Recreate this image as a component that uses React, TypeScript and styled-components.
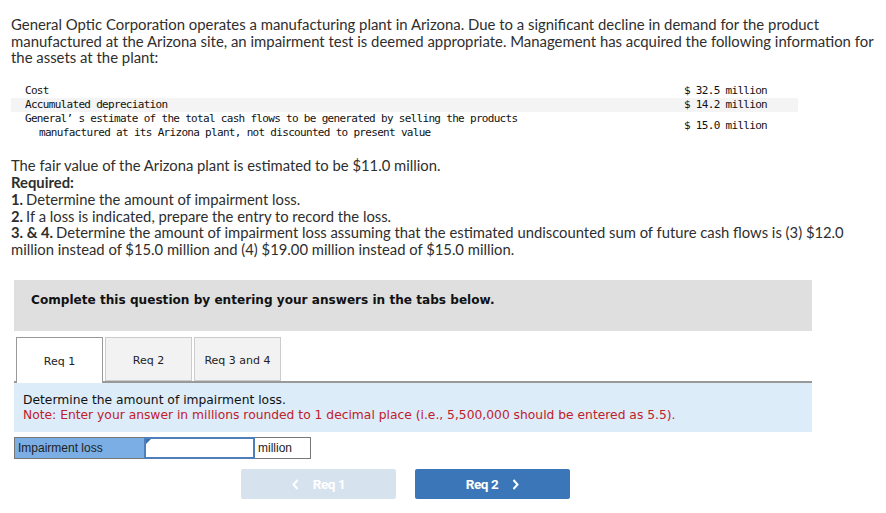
import React from 'react';
import styled, { createGlobalStyle } from 'styled-components';

const GlobalStyle = createGlobalStyle`
  body {
    margin: 0;
    background: #fff;
    font-family: Lato, "Open Sans", sans-serif;
    color: #2e2e2e;
  }
`;

const Page = styled.div`
  width: 886px;
  padding: 16px 0 0 11px;
  box-sizing: border-box;
`;

const Intro = styled.p`
  margin: 0;
  width: 870px;
  font-size: 14.9px;
  line-height: 16.6px;
`;

const FactTable = styled.div`
  margin-top: 18px;
  width: 787px;
  font-family: "DejaVu Sans Mono", monospace;
  font-size: 11px;
  letter-spacing: -0.69px;
  color: #111;
`;

const FactRow = styled.div<{ $shaded?: boolean }>`
  display: grid;
  grid-template-columns: 540px 1fr 114px;
  align-items: center;
  line-height: 14px;
  background: ${p => (p.$shaded ? '#f4f4f4' : 'transparent')};
`;

const FactLabel = styled.div`
  padding-left: 28px;
  text-indent: -14px;
`;

const FactValue = styled.div`
  grid-column: 3;
  white-space: pre;
`;

const Body = styled.div`
  margin-top: 17px;
  font-size: 14.8px;
  line-height: 16.9px;
`;

const Line = styled.div``;

const Strong = styled.b`
  font-weight: 700;
  margin-right: 0.2em;
`;

const Banner = styled.div`
  margin: 22px 0 0 3px;
  width: 798px;
  height: 51px;
  box-sizing: border-box;
  padding: 13px 17px 0;
  background: #dfdfdf;
  font-family: "DejaVu Sans", Verdana, sans-serif;
  font-weight: 700;
  font-size: 12.1px;
  color: #111;
`;

const TabBar = styled.div`
  margin: 6px 0 0 3px;
  width: 798px;
  display: flex;
  align-items: flex-end;
  gap: 2px;
  padding-left: 2px;
  box-sizing: border-box;
  border-bottom: 2px solid #999;
  height: 46px;
`;

const Tab = styled.div<{ $active?: boolean }>`
  width: 87px;
  height: ${p => (p.$active ? '46px' : '44px')};
  margin-bottom: ${p => (p.$active ? '-2px' : '0')};
  box-sizing: border-box;
  display: flex;
  align-items: center;
  justify-content: center;
  padding-top: 2px;
  font-family: "DejaVu Sans", Verdana, sans-serif;
  font-size: 11px;
  color: #222;
  background: ${p => (p.$active ? '#fff' : '#f2f2f2')};
  border: 1px solid ${p => (p.$active ? '#999' : '#ccc')};
  border-bottom: ${p => (p.$active ? 'none' : '1px solid #ccc')};
  position: relative;
  z-index: 1;
`;

const Panel = styled.div`
  margin-left: 3px;
  width: 798px;
  height: 49px;
  box-sizing: border-box;
  padding: 10px 9px 0;
  background: #dcecf9;
  font-family: "DejaVu Sans", Verdana, sans-serif;
  font-size: 12.3px;
  line-height: 15px;
  color: #111;
`;

const Note = styled.div`
  color: #c0202a;
`;

const AnswerRow = styled.div`
  margin: 5px 0 0 3px;
  display: flex;
  height: 22px;
  font-family: "Liberation Sans", Arial, sans-serif;
  font-size: 12px;
  color: #222;
`;

const AnswerLabel = styled.div`
  width: 130px;
  box-sizing: border-box;
  background: #7aaee4;
  border: 1px solid #777;
  border-right: none;
  padding-left: 3px;
  display: flex;
  align-items: center;
`;

const AnswerInput = styled.input`
  width: 111px;
  height: 22px;
  box-sizing: border-box;
  border: 2px solid #4f7fba;
  margin: 0;
  padding: 0 4px;
  outline: none;
  background: #fff;
`;

const InputWrap = styled.div`
  position: relative;
  &::before {
    content: '';
    position: absolute;
    left: 2px;
    top: 2px;
    border-top: 5px solid #3a6fb0;
    border-right: 5px solid transparent;
  }
`;

const Unit = styled.div`
  width: 56px;
  box-sizing: border-box;
  border: 1px solid #777;
  border-left: none;
  padding-left: 3px;
  display: flex;
  align-items: center;
`;

const NavRow = styled.div`
  margin: 10px 0 0 230px;
  display: flex;
  gap: 19px;
`;

const NavButton = styled.button<{ $disabled?: boolean }>`
  width: 155px;
  height: 30px;
  border: none;
  border-radius: 2px;
  background: ${p => (p.$disabled ? '#d7e2ef' : '#3b77b8')};
  color: #fff;
  font-family: Roboto, "Liberation Sans", sans-serif;
  font-weight: 700;
  font-size: 13.5px;
  letter-spacing: -0.4px;
  display: flex;
  align-items: center;
  justify-content: center;
  gap: 14px;
  padding: 0;
  cursor: pointer;
`;

const Chevron = ({ dir }: { dir: 'left' | 'right' }) => (
  <svg width="7" height="11" viewBox="0 0 7 11">
    <path
      d={dir === 'left' ? 'M5.5 1 L1.5 5.5 L5.5 10' : 'M1.5 1 L5.5 5.5 L1.5 10'}
      fill="none"
      stroke="#fff"
      strokeWidth="2"
    />
  </svg>
);

export default function App() {
  return (
    <>
      <GlobalStyle />
      <Page>
        <Intro>
          General Optic Corporation operates a manufacturing plant in Arizona. Due to a significant decline in demand for the product manufactured at the Arizona site, an impairment test is deemed appropriate. Management has acquired the following information for the assets at the plant:
        </Intro>

        <FactTable>
          <FactRow>
            <FactLabel>Cost</FactLabel>
            <FactValue>$ 32.5 million</FactValue>
          </FactRow>
          <FactRow $shaded>
            <FactLabel>Accumulated depreciation</FactLabel>
            <FactValue>$ 14.2 million</FactValue>
          </FactRow>
          <FactRow>
            <FactLabel>
              General’ s estimate of the total cash flows to be generated by selling the products manufactured at its Arizona plant, not discounted to present value
            </FactLabel>
            <FactValue>$ 15.0 million</FactValue>
          </FactRow>
        </FactTable>

        <Body>
          <Line>The fair value of the Arizona plant is estimated to be $11.0 million.</Line>
          <Line><Strong>Required:</Strong></Line>
          <Line><Strong>1.</Strong>Determine the amount of impairment loss.</Line>
          <Line><Strong>2.</Strong>If a loss is indicated, prepare the entry to record the loss.</Line>
          <Line>
            <Strong>3. &amp; 4.</Strong>Determine the amount of impairment loss assuming that the estimated undiscounted sum of future cash flows is (3) $12.0 million instead of $15.0 million and (4) $19.00 million instead of $15.0 million.
          </Line>
        </Body>

        <Banner>Complete this question by entering your answers in the tabs below.</Banner>

        <TabBar>
          <Tab $active>Req 1</Tab>
          <Tab>Req 2</Tab>
          <Tab>Req 3 and 4</Tab>
        </TabBar>

        <Panel>
          <div>Determine the amount of impairment loss.</div>
          <Note>Note: Enter your answer in millions rounded to 1 decimal place (i.e., 5,500,000 should be entered as 5.5).</Note>
        </Panel>

        <AnswerRow>
          <AnswerLabel>Impairment loss</AnswerLabel>
          <InputWrap>
            <AnswerInput type="text" />
          </InputWrap>
          <Unit>million</Unit>
        </AnswerRow>

        <NavRow>
          <NavButton $disabled>
            <Chevron dir="left" />
            Req 1
          </NavButton>
          <NavButton>
            Req 2
            <Chevron dir="right" />
          </NavButton>
        </NavRow>
      </Page>
    </>
  );
}
